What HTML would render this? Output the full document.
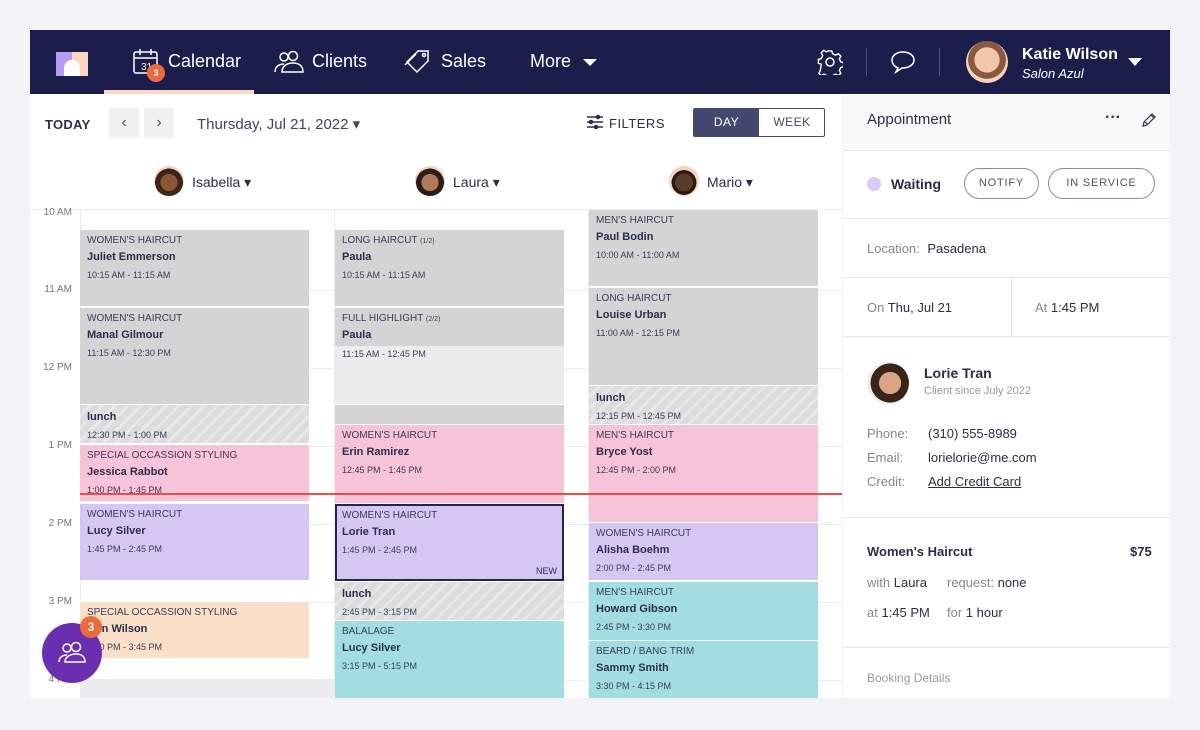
<!DOCTYPE html>
<html><head><meta charset="utf-8"><style>
*{margin:0;padding:0;box-sizing:border-box}
body{width:1200px;height:730px;background:#f3f3f5;font-family:"Liberation Sans",sans-serif;color:#2b2d4e;position:relative;overflow:hidden}
.a{position:absolute}
.nav{left:30px;top:30px;width:1140px;height:64px;background:#1b1e4b;color:#fff}
.nt{font-size:18px;top:21px}
.cal{left:30px;top:94px;width:812px;height:604px;background:#fff;overflow:hidden}
.rp{left:843px;top:94px;width:327px;height:604px;background:#fff}
.ev{position:absolute;padding:5px 7px;font-size:10px;color:#2b2d4e;overflow:hidden}
.ev .t{text-transform:uppercase;font-size:10px;color:#3a3c5a}
.ev .n{font-weight:bold;font-size:11px;margin-top:5px}
.ev .h{font-size:9px;margin-top:7px;color:#3a3c5a}
.g{background:#d4d4d4}.p{background:#f7c3d8}.u{background:#d5c7f2}.o{background:#fbdfc6}.c{background:#a2dee1}
.x{background:repeating-linear-gradient(135deg,#dcdcdc 0 6px,#e8e8e8 6px 9px)}
.tl{font-size:10px;color:#777;left:10px;width:32px;text-align:right}
.hl{height:1px;background:#ececec}
.lb{color:#888;font-size:13px}
.vl{font-size:13px;color:#2b2d4e}
.sep{left:0;width:327px;height:1px;background:#e6e6ea}
</style></head><body>
<div class="a nav">
 <div class="a" style="left:26px;top:22px;width:32px;height:24px;background:#f9d7c0;border-radius:0"></div>
 <div class="a" style="left:26px;top:22px;width:16px;height:24px;background:#b59cf5"></div>
 <div class="a" style="left:34px;top:30px;width:16px;height:16px;background:#fff;border-radius:8px 8px 0 0"></div>
 <svg class="a" style="left:102px;top:18px" width="28" height="28" viewBox="0 0 28 28" fill="none" stroke="#fff" stroke-width="1.5"><rect x="2" y="4" width="23" height="21" rx="2"/><path d="M2 10h23M8 1v6M19 1v6"/><text x="9" y="22" font-size="10" fill="#fff" stroke="none">31</text></svg>
 <div class="a" style="left:117px;top:34px;width:18px;height:18px;border-radius:9px;background:#ee6a3b;font-size:9px;text-align:center;line-height:18px;font-weight:bold">3</div>
 <div class="a nt" style="left:138px">Calendar</div>
 <div class="a" style="left:74px;top:60px;width:150px;height:4px;background:#fbd9c6"></div>
 <svg class="a" style="left:244px;top:20px" width="30" height="24" viewBox="0 0 30 24" fill="none" stroke="#fff" stroke-width="1.5"><circle cx="10" cy="7" r="4"/><circle cx="19" cy="6" r="4.5"/><path d="M1 22c0-6 5-8 9-8M8 22c0-6 5-9 11-9s10 3 10 9z"/></svg>
 <div class="a nt" style="left:282px">Clients</div>
 <svg class="a" style="left:374px;top:19px" width="28" height="26" viewBox="0 0 28 26" fill="none" stroke="#fff" stroke-width="1.5"><path d="M3 13L14 2h10v10L13 23z"/><path d="M1 16L12 5"/><circle cx="20" cy="6" r="1.5"/></svg>
 <div class="a nt" style="left:411px">Sales</div>
 <div class="a nt" style="left:500px">More</div>
 <div class="a" style="left:553px;top:29px;border:7px solid transparent;border-top:7px solid #fff;border-bottom:0"></div>
 <svg class="a" style="left:787px;top:19px" width="26" height="26" viewBox="0 0 26 26" fill="none" stroke="#fff" stroke-width="1.5"><path d="M11 2h4l1 3 3 1.5 3-1.5 2.5 2.5-1.5 3 1.5 3 3 1v4l-3 1-1.5 3 1.5 3-2.5 2.5-3-1.5-3 1.5-1 3h-4l-1-3-3-1.5-3 1.5-2.5-2.5 1.5-3L4 16l-3-1v-4l3-1 1.5-3L4 4 6.5 1.5l3 1.5z" transform="scale(.95) translate(.5 0)"/><circle cx="13" cy="13" r="4"/></svg>
 <div class="a" style="left:836px;top:18px;width:1px;height:28px;background:#4a4d72"></div>
 <svg class="a" style="left:860px;top:20px" width="26" height="24" viewBox="0 0 26 24" fill="none" stroke="#fff" stroke-width="1.5"><path d="M13 2C6 2 2 6 2 10s3 7 6 8l-2 4 6-4c8 0 12-4 12-8S20 2 13 2z"/></svg>
 <div class="a" style="left:909px;top:18px;width:1px;height:28px;background:#4a4d72"></div>
 <div class="a" style="left:936px;top:11px;width:42px;height:42px;border-radius:21px;background:radial-gradient(circle at 50% 45%,#f0c7a8 0 40%,#8a5a3c 41% 60%,#f7d3bd 61%)"></div>
 <div class="a" style="left:992px;top:16px;font-size:16px;font-weight:bold">Katie Wilson</div>
 <div class="a" style="left:992px;top:36px;font-size:13px;font-style:italic">Salon Azul</div>
 <div class="a" style="left:1098px;top:28px;border:7px solid transparent;border-top:8px solid #fff;border-bottom:0"></div>
</div>

<div class="a cal">
 <div class="a" style="left:15px;top:23px;font-size:13px;font-weight:bold;color:#2b2d4e;letter-spacing:.3px">TODAY</div>
 <div class="a" style="left:79px;top:14px;width:30px;height:30px;background:#f0f0f0;border-radius:3px;text-align:center;line-height:30px;font-size:16px;color:#555">‹</div>
 <div class="a" style="left:114px;top:14px;width:30px;height:30px;background:#f0f0f0;border-radius:3px;text-align:center;line-height:30px;font-size:16px;color:#555">›</div>
 <div class="a" style="left:167px;top:21px;font-size:15px;color:#40426a">Thursday, Jul 21, 2022 ▾</div>
 <svg class="a" style="left:556px;top:20px" width="18" height="16" viewBox="0 0 18 16" stroke="#2b2d4e" stroke-width="1.5"><path d="M1 3h16M1 8h16M1 13h16"/><circle cx="12" cy="3" r="1.5" fill="#2b2d4e"/><circle cx="5" cy="8" r="1.5" fill="#2b2d4e"/><circle cx="10" cy="13" r="1.5" fill="#2b2d4e"/></svg>
 <div class="a" style="left:579px;top:22px;font-size:13px;letter-spacing:.5px">FILTERS</div>
 <div class="a" style="left:663px;top:14px;width:132px;height:29px;border:1px solid #44476e;border-radius:2px;overflow:hidden">
  <div class="a" style="left:0;top:0;width:65px;height:27px;background:#44476e;color:#fff;font-size:12px;text-align:center;line-height:27px;letter-spacing:.5px">DAY</div>
  <div class="a" style="left:65px;top:0;width:66px;height:27px;color:#44476e;font-size:12px;text-align:center;line-height:27px;letter-spacing:.5px">WEEK</div>
 </div>
 <div class="a" style="left:124px;top:72px;width:30px;height:30px;border-radius:15px;background:radial-gradient(circle at 50% 55%,#8a5634 0 38%,#3b2418 39% 62%,#f7d3bd 63%)"></div>
 <div class="a" style="left:162px;top:80px;font-size:14px">Isabella ▾</div>
 <div class="a" style="left:385px;top:72px;width:30px;height:30px;border-radius:15px;background:radial-gradient(circle at 50% 55%,#b07b58 0 38%,#2c1e17 39% 62%,#f7d3bd 63%)"></div>
 <div class="a" style="left:423px;top:80px;font-size:14px">Laura ▾</div>
 <div class="a" style="left:639px;top:72px;width:30px;height:30px;border-radius:15px;background:radial-gradient(circle at 50% 55%,#5a3a28 0 40%,#2a1a12 41% 55%,#f7d3bd 56%)"></div>
 <div class="a" style="left:677px;top:80px;font-size:14px">Mario ▾</div>
 <div class="a hl" style="left:0;top:115px;width:812px"></div>
 <div class="a" style="left:50px;top:115px;width:1px;height:500px;background:#ececec"></div>
 <div class="a" style="left:304px;top:115px;width:1px;height:500px;background:#ececec"></div>
 <div class="a" style="left:558px;top:115px;width:1px;height:500px;background:#ececec"></div>
 <!-- hour lines -->
 <div class="a hl" style="left:50px;top:196px;width:762px"></div>
 <div class="a hl" style="left:50px;top:274px;width:762px"></div>
 <div class="a hl" style="left:50px;top:352px;width:762px"></div>
 <div class="a hl" style="left:50px;top:430px;width:762px"></div>
 <div class="a hl" style="left:50px;top:508px;width:762px"></div>
 <div class="a hl" style="left:50px;top:586px;width:762px"></div>
 <div class="a tl" style="top:113px">10 AM</div>
 <div class="a tl" style="top:190px">11 AM</div>
 <div class="a tl" style="top:268px">12 PM</div>
 <div class="a tl" style="top:346px">1 PM</div>
 <div class="a tl" style="top:424px">2 PM</div>
 <div class="a tl" style="top:502px">3 PM</div>
 <div class="a tl" style="top:580px">4 PM</div>
 <div class="a" style="left:50px;top:585px;width:254px;height:20px;background:#ececee"></div>
 <!-- col1 -->
 <div class="ev g" style="left:50px;top:136px;width:229px;height:76px"><div class="t">Women's Haircut</div><div class="n">Juliet Emmerson</div><div class="h">10:15 AM - 11:15 AM</div></div>
 <div class="ev g" style="left:50px;top:214px;width:229px;height:96px"><div class="t">Women's Haircut</div><div class="n">Manal Gilmour</div><div class="h">11:15 AM - 12:30 PM</div></div>
 <div class="ev x" style="left:50px;top:311px;width:229px;height:38px"><div class="n" style="margin-top:1px">lunch</div><div class="h">12:30 PM - 1:00 PM</div></div>
 <div class="ev p" style="left:50px;top:351px;width:229px;height:56px"><div class="t">Special Occassion Styling</div><div class="n">Jessica Rabbot</div><div class="h">1:00 PM - 1:45 PM</div></div>
 <div class="ev u" style="left:50px;top:410px;width:229px;height:76px"><div class="t">Women's Haircut</div><div class="n">Lucy Silver</div><div class="h">1:45 PM - 2:45 PM</div></div>
 <div class="ev o" style="left:50px;top:508px;width:229px;height:56px"><div class="t">Special Occassion Styling</div><div class="n">Ann Wilson</div><div class="h">3:00 PM - 3:45 PM</div></div>
 <!-- col2 -->
 <div class="ev g" style="left:305px;top:136px;width:229px;height:76px"><div class="t">Long Haircut <span style="font-size:7px">(1/2)</span></div><div class="n">Paula</div><div class="h">10:15 AM - 11:15 AM</div></div>
 <div class="a" style="left:305px;top:214px;width:229px;height:96px;background:#ececec"></div>
 <div class="ev g" style="left:305px;top:214px;width:229px;height:38px"><div class="t">Full Highlight <span style="font-size:7px">(2/2)</span></div><div class="n">Paula</div></div>
 <div class="a" style="left:312px;top:255px;font-size:9px;color:#3a3c5a">11:15 AM - 12:45 PM</div>
 <div class="a g" style="left:305px;top:311px;width:229px;height:19px"></div>
 <div class="ev p" style="left:305px;top:331px;width:229px;height:78px"><div class="t">Women's Haircut</div><div class="n">Erin Ramirez</div><div class="h">12:45 PM - 1:45 PM</div></div>
 <div class="ev u" style="left:305px;top:410px;width:229px;height:77px;border:2px solid #23254a;padding:4px 5px"><div class="t">Women's Haircut</div><div class="n">Lorie Tran</div><div class="h">1:45 PM - 2:45 PM</div><div class="a" style="right:5px;bottom:3px;font-size:9px">NEW</div></div>
 <div class="ev x" style="left:305px;top:488px;width:229px;height:38px"><div class="n" style="margin-top:1px">lunch</div><div class="h">2:45 PM - 3:15 PM</div></div>
 <div class="ev c" style="left:305px;top:527px;width:229px;height:80px"><div class="t">Balalage</div><div class="n">Lucy Silver</div><div class="h">3:15 PM - 5:15 PM</div></div>
 <!-- col3 -->
 <div class="ev g" style="left:559px;top:116px;width:229px;height:76px"><div class="t">Men's Haircut</div><div class="n">Paul Bodin</div><div class="h">10:00 AM - 11:00 AM</div></div>
 <div class="ev g" style="left:559px;top:194px;width:229px;height:97px"><div class="t">Long Haircut</div><div class="n">Louise Urban</div><div class="h">11:00 AM - 12:15 PM</div></div>
 <div class="ev x" style="left:559px;top:292px;width:229px;height:38px"><div class="n" style="margin-top:1px">lunch</div><div class="h">12:15 PM - 12:45 PM</div></div>
 <div class="ev p" style="left:559px;top:331px;width:229px;height:97px"><div class="t">Men's Haircut</div><div class="n">Bryce Yost</div><div class="h">12:45 PM - 2:00 PM</div></div>
 <div class="ev u" style="left:559px;top:429px;width:229px;height:57px"><div class="t">Women's Haircut</div><div class="n">Alisha Boehm</div><div class="h">2:00 PM - 2:45 PM</div></div>
 <div class="ev c" style="left:559px;top:488px;width:229px;height:58px"><div class="t">Men's Haircut</div><div class="n">Howard Gibson</div><div class="h">2:45 PM - 3:30 PM</div></div>
 <div class="ev c" style="left:559px;top:547px;width:229px;height:60px"><div class="t">Beard / Bang Trim</div><div class="n">Sammy Smith</div><div class="h">3:30 PM - 4:15 PM</div></div>
 <div class="a" style="left:50px;top:399px;width:762px;height:1.5px;background:#ee4b4b"></div>
</div>

<div class="a" style="left:42px;top:623px;width:60px;height:60px;border-radius:30px;background:#6a2fb0"></div>
<svg class="a" style="left:58px;top:641px" width="28" height="24" viewBox="0 0 28 24" fill="none" stroke="#fff" stroke-width="1.5"><circle cx="9" cy="7" r="4"/><circle cx="18" cy="6" r="4.5"/><path d="M1 21c0-5 4-7 8-7M7 21c0-5 5-8 11-8s9 3 9 8z"/></svg>
<div class="a" style="left:80px;top:616px;width:22px;height:22px;border-radius:11px;background:#ee6a3b;color:#fff;font-size:12px;font-weight:bold;text-align:center;line-height:22px">3</div>

<div class="a rp">
 <div class="a" style="left:0;top:0;width:327px;height:56px;background:#f9f9f9"></div>
 <div class="a" style="left:24px;top:17px;font-size:15px">Appointment</div>
 <div class="a" style="left:262px;top:15px;font-size:16px;font-weight:bold">···</div>
 <svg class="a" style="left:298px;top:18px" width="16" height="16" viewBox="0 0 16 16" fill="none" stroke="#2b2d4e" stroke-width="1.2"><path d="M2 14l1-4 8-8 3 3-8 8z M10 3l3 3 M4 10l2 2"/></svg>
 <div class="a sep" style="top:56px"></div>
 <div class="a" style="left:24px;top:83px;width:14px;height:14px;border-radius:7px;background:#d8ccf5"></div>
 <div class="a" style="left:48px;top:82px;font-size:14px;font-weight:bold">Waiting</div>
 <div class="a" style="left:121px;top:74px;width:75px;height:31px;border:1px solid #8a8ca5;border-radius:16px;font-size:11px;text-align:center;line-height:29px;color:#555;letter-spacing:.8px">NOTIFY</div>
 <div class="a" style="left:205px;top:74px;width:107px;height:31px;border:1px solid #8a8ca5;border-radius:16px;font-size:11px;text-align:center;line-height:29px;color:#555;letter-spacing:.8px">IN SERVICE</div>
 <div class="a sep" style="top:124px"></div>
 <div class="a lb" style="left:24px;top:147px">Location: <span class="vl" style="margin-left:4px">Pasadena</span></div>
 <div class="a sep" style="top:183px"></div>
 <div class="a lb" style="left:24px;top:206px">On <span class="vl">Thu, Jul 21</span></div>
 <div class="a" style="left:168px;top:183px;width:1px;height:59px;background:#e6e6ea"></div>
 <div class="a lb" style="left:192px;top:206px">At <span class="vl">1:45 PM</span></div>
 <div class="a sep" style="top:242px"></div>
 <div class="a" style="left:24px;top:268px;width:42px;height:42px;border-radius:21px;background:radial-gradient(circle at 55% 50%,#d9a584 0 35%,#3a2418 36% 62%,#eee 63%)"></div>
 <div class="a" style="left:81px;top:271px;font-size:14px;font-weight:bold">Lorie Tran</div>
 <div class="a" style="left:81px;top:291px;font-size:11px;color:#999">Client since July 2022</div>
 <div class="a lb" style="left:24px;top:332px">Phone:</div><div class="a vl" style="left:85px;top:332px">(310) 555-8989</div>
 <div class="a lb" style="left:24px;top:356px">Email:</div><div class="a vl" style="left:85px;top:356px">lorielorie@me.com</div>
 <div class="a lb" style="left:24px;top:380px">Credit:</div><div class="a vl" style="left:85px;top:380px;text-decoration:underline">Add Credit Card</div>
 <div class="a sep" style="top:423px"></div>
 <div class="a" style="left:24px;top:450px;font-size:13px;font-weight:bold">Women's Haircut</div>
 <div class="a" style="left:287px;top:450px;font-size:13px;font-weight:bold">$75</div>
 <div class="a lb" style="left:24px;top:481px">with <span class="vl">Laura</span></div>
 <div class="a lb" style="left:104px;top:481px">request: <span class="vl">none</span></div>
 <div class="a lb" style="left:24px;top:511px">at <span class="vl">1:45 PM</span></div>
 <div class="a lb" style="left:104px;top:511px">for <span class="vl">1 hour</span></div>
 <div class="a sep" style="top:553px"></div>
 <div class="a" style="left:24px;top:577px;font-size:12px;color:#999">Booking Details</div>
</div>
</body></html>
